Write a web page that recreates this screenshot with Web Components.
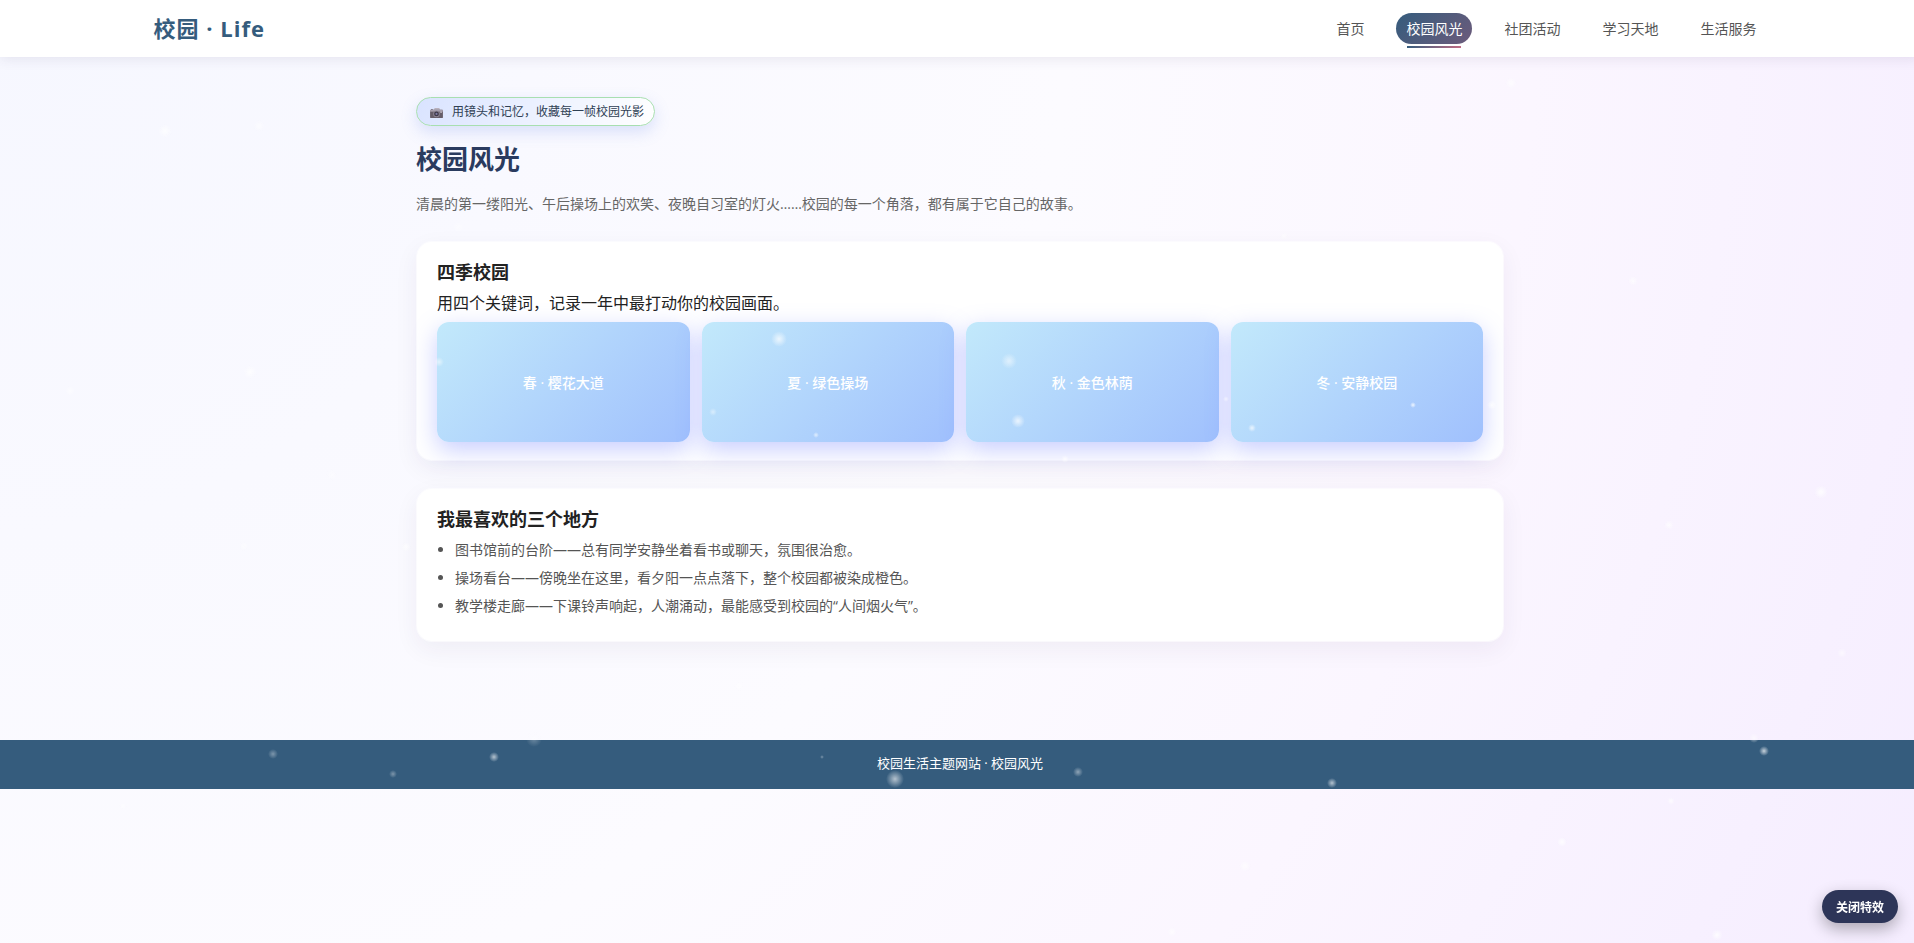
<!DOCTYPE html>
<html lang="zh-CN">
<head>
<meta charset="UTF-8">
<title>校园风光</title>
<style>
    html { overflow: hidden; }
    body {
        margin: 0 -6px 0 0;
        min-height: 100vh;
        font-family: "Open Sans", "Noto Sans CJK SC", sans-serif;
        color: #222;
        background: radial-gradient(circle at top left, #f6f7ff 0%, #fcfbff 50%, #fbf6ff 72%, #f5edff 100%);
    }
</style>
</head>
<body>
    <site-header>
        <nav-link href="#home">首页</nav-link>
        <nav-link href="#scenery" active>校园风光</nav-link>
        <nav-link href="#clubs">社团活动</nav-link>
        <nav-link href="#study">学习天地</nav-link>
        <nav-link href="#services">生活服务</nav-link>
    </site-header>

    <page-main>
        <page-hero heading="校园风光">
            <span slot="badge">用镜头和记忆，收藏每一帧校园光影</span>
            清晨的第一缕阳光、午后操场上的欢笑、夜晚自习室的灯火……校园的每一个角落，都有属于它自己的故事。
        </page-hero>
        <info-card heading="四季校园">
            <season-grid intro="用四个关键词，记录一年中最打动你的校园画面。">
                <season-tile>春 · 樱花大道</season-tile>
                <season-tile>夏 · 绿色操场</season-tile>
                <season-tile>秋 · 金色林荫</season-tile>
                <season-tile>冬 · 安静校园</season-tile>
            </season-grid>
        </info-card>
        <info-card heading="我最喜欢的三个地方">
            <place-list></place-list>
        </info-card>
    </page-main>

    <site-footer>校园生活主题网站 · 校园风光</site-footer>
    <snow-layer></snow-layer>
    <effect-toggle></effect-toggle>

<script>
class SiteHeader extends HTMLElement {
    constructor() {
        super();
        this.attachShadow({ mode: "open" });
        this.shadowRoot.innerHTML = `
            <style>
                :host { display: block; position: relative; background: #fff; box-shadow: 0 2px 12px rgba(60, 50, 90, 0.1); }
                header { display: flex; justify-content: space-between; align-items: flex-start; padding: 13px 8%; }
                .logo { font-size: 22px; line-height: 30px; font-weight: 700; letter-spacing: 1px; color: #355c7d; }
                nav { display: flex; gap: 22px; }
            </style>
            <header>
                <div class="logo">校园 · Life</div>
                <nav><slot></slot></nav>
            </header>
        `;
    }
}
customElements.define("site-header", SiteHeader);

class NavLink extends HTMLElement {
    constructor() {
        super();
        this.attachShadow({ mode: "open" });
        this.shadowRoot.innerHTML = `
            <style>
                :host { display: block; }
                a { position: relative; display: block; padding: 6px 10px 5px; border-radius: 16px; font-size: 14px; line-height: 20px; color: #555; text-decoration: none; }
                :host([active]) a { color: #fff; background: linear-gradient(135deg, #355c7d, #6c5b7b); }
                :host([active]) a::after {
                    content: ""; position: absolute; left: 11px; right: 11px; bottom: -4px; height: 2px;
                    background: linear-gradient(90deg, #355c7d, #c06c84);
                }
            </style>
            <a><slot></slot></a>
        `;
    }

    connectedCallback() {
        this.shadowRoot.querySelector("a").href = this.getAttribute("href");
    }
}
customElements.define("nav-link", NavLink);

class PageMain extends HTMLElement {
    constructor() {
        super();
        this.attachShadow({ mode: "open" });
        this.shadowRoot.innerHTML = `
            <style>
                :host { display: block; }
                main { display: flex; flex-direction: column; gap: 27px; box-sizing: border-box; max-width: 1120px; margin: 0 auto; padding: 40px 16px 98px; }
            </style>
            <main><slot></slot></main>
        `;
    }
}
customElements.define("page-main", PageMain);

class PageHero extends HTMLElement {
    constructor() {
        super();
        this.attachShadow({ mode: "open" });
        this.shadowRoot.innerHTML = `
            <style>
                :host { display: flex; flex-direction: column; align-items: flex-start; }
                .badge {
                    display: flex; align-items: center; gap: 8px; padding: 5px 10px 4px 12px;
                    border: 1px solid #a8dfb0; border-radius: 15px; font-size: 12px; line-height: 18px; color: #2f4054;
                    background: linear-gradient(120deg, #d9e3ff, #fff);
                    box-shadow: 0 6px 16px rgba(100, 130, 230, 0.22);
                }
                svg { display: block; margin-top: 3px; }
                h1 { margin: 13px 0 0; font-size: 26px; line-height: 40px; color: #2a3b5f; }
                p { margin: 15px 0 0; font-size: 14px; line-height: 20px; color: #666; }
            </style>
            <div class="badge">
                <svg width="15" height="11" viewBox="0 0 16 12" aria-hidden="true">
                    <path d="M2 1h2v1H2z" fill="#6d6470"/>
                    <path d="M5 2l1-2h5l1 2z" fill="#b9b1bd"/>
                    <rect x="1" y="2" width="14" height="9" rx="1" fill="#665d69"/>
                    <rect x="1" y="2" width="14" height="2" fill="#a79fae"/>
                    <circle cx="8" cy="6.5" r="3.6" fill="#8d8494"/>
                    <circle cx="8" cy="6.5" r="2.6" fill="#3d3848"/>
                    <circle cx="8" cy="6.5" r="1.2" fill="#7d79a2"/>
                    <rect x="12" y="4" width="2" height="1" fill="#e6dfe8"/>
                </svg>
                <slot name="badge"></slot>
            </div>
            <h1></h1>
            <p><slot></slot></p>
        `;
    }

    connectedCallback() {
        this.shadowRoot.querySelector("h1").textContent = this.getAttribute("heading");
    }
}
customElements.define("page-hero", PageHero);

class InfoCard extends HTMLElement {
    constructor() {
        super();
        this.attachShadow({ mode: "open" });
        this.shadowRoot.innerHTML = `
            <style>
                :host { display: block; }
                section { padding: 17px 20px 18px; border: 1px solid rgba(255, 255, 255, 0.6); border-radius: 16px; background: #fff; background-clip: padding-box; box-shadow: 0 8px 24px rgba(50, 40, 80, 0.06); }
                h2 { margin: 0; font-size: 18px; line-height: 26px; }
            </style>
            <section>
                <h2></h2>
                <slot></slot>
            </section>
        `;
    }

    connectedCallback() {
        this.shadowRoot.querySelector("h2").textContent = this.getAttribute("heading");
    }
}
customElements.define("info-card", InfoCard);

class SeasonGrid extends HTMLElement {
    constructor() {
        super();
        this.attachShadow({ mode: "open" });
        this.shadowRoot.innerHTML = `
            <style>
                :host { display: block; }
                p { margin: 6px 0 7px; font-size: 16px; line-height: 24px; }
                .grid { display: grid; grid-template-columns: repeat(4, 1fr); gap: 12px; }
            </style>
            <p></p>
            <div class="grid"><slot></slot></div>
        `;
    }

    connectedCallback() {
        this.shadowRoot.querySelector("p").textContent = this.getAttribute("intro");
    }
}
customElements.define("season-grid", SeasonGrid);

class SeasonTile extends HTMLElement {
    constructor() {
        super();
        this.attachShadow({ mode: "open" });
        this.shadowRoot.innerHTML = `
            <style>
                :host {
                    display: flex; align-items: center; justify-content: center; height: 120px; border-radius: 12px;
                    font-size: 14px; font-weight: 500; color: #fff;
                    background: linear-gradient(135deg, #c2e9fb, #a0c0fd);
                    box-shadow: 0 8px 24px rgba(110, 125, 255, 0.38);
                }
            </style>
            <slot></slot>
        `;
    }
}
customElements.define("season-tile", SeasonTile);

class PlaceList extends HTMLElement {
    constructor() {
        super();
        this.attachShadow({ mode: "open" });
        this.shadowRoot.innerHTML = `
            <style>
                :host { display: block; }
                ul { margin: 6px 0 5px; padding-left: 18px; font-size: 14px; line-height: 24px; color: #555; }
                li { margin-bottom: 4px; }
            </style>
            <ul>
                <li>图书馆前的台阶——总有同学安静坐着看书或聊天，氛围很治愈。</li>
                <li>操场看台——傍晚坐在这里，看夕阳一点点落下，整个校园都被染成橙色。</li>
                <li>教学楼走廊——下课铃声响起，人潮涌动，最能感受到校园的“人间烟火气”。</li>
            </ul>
        `;
    }
}
customElements.define("place-list", PlaceList);

class SiteFooter extends HTMLElement {
    constructor() {
        super();
        this.attachShadow({ mode: "open" });
        this.shadowRoot.innerHTML = `
            <style>
                :host { display: block; background: #355c7d; color: #fff; }
                footer { padding: 13px 0 16px; text-align: center; font-size: 13px; line-height: 20px; }
            </style>
            <footer><slot></slot></footer>
        `;
    }
}
customElements.define("site-footer", SiteFooter);

// [x, y, radius, opacity]
const flakes = [
    [165, 131, 7, 0.8], [259, 126, 6, 0.6], [250, 372, 7, 0.8], [70, 391, 5, 0.6], [332, 475, 6, 0.4],
    [244, 546, 5, 0.5], [406, 547, 5, 0.8], [458, 227, 6, 0.5], [439, 362, 5, 0.6], [779, 339, 8, 0.8],
    [713, 412, 4, 0.5], [816, 435, 3, 0.7], [1009, 361, 8, 0.6], [1018, 421, 7, 0.8], [1252, 428, 4, 0.8],
    [1413, 405, 3, 0.9], [1492, 405, 5, 0.8], [1065, 459, 4, 0.8], [1226, 399, 3, 0.6], [1284, 236, 4, 0.5],
    [273, 754, 5, 0.4], [393, 774, 4, 0.4], [494, 757, 5, 0.7], [534, 739, 8, 0.3], [822, 757, 2, 0.4],
    [895, 779, 9, 0.7], [1078, 772, 5, 0.5], [1332, 783, 5, 0.7], [1764, 751, 5, 0.8], [1754, 738, 5, 0.6],
    [1717, 935, 6, 0.9], [1633, 281, 5, 0.8], [1821, 492, 7, 0.9], [1669, 525, 5, 0.8], [1562, 842, 5, 0.9],
    [1671, 801, 4, 0.8], [1245, 866, 6, 0.7], [1511, 83, 6, 0.7], [1172, 932, 5, 0.7], [739, 686, 5, 0.5],
    [1842, 653, 5, 0.6], [123, 806, 4, 0.5]
];

class SnowLayer extends HTMLElement {
    constructor() {
        super();
        this.attachShadow({ mode: "open" });
        this.shadowRoot.innerHTML = `
            <style>
                :host { position: fixed; inset: 0; pointer-events: none; }
                svg { display: block; width: 100%; height: 100%; }
            </style>
            <svg aria-hidden="true">
                <defs>
                    <radialGradient id="flake">
                        <stop offset="0" stop-color="#fff" stop-opacity="0.9"/>
                        <stop offset="1" stop-color="#fff" stop-opacity="0"/>
                    </radialGradient>
                </defs>
                ${flakes.map(([x, y, r, o]) => `<circle cx="${x}" cy="${y}" r="${r}" opacity="${o}" fill="url(#flake)"/>`).join("")}
            </svg>
        `;
    }
}
customElements.define("snow-layer", SnowLayer);

class EffectToggle extends HTMLElement {
    constructor() {
        super();
        this.attachShadow({ mode: "open" });
        this.shadowRoot.innerHTML = `
            <style>
                :host { position: fixed; right: 16px; bottom: 20px; }
                button {
                    display: block; padding: 9px 14px 6px; border: 0; border-radius: 17px; cursor: pointer;
                    font: 700 12px/18px "Open Sans", "Noto Sans CJK SC", sans-serif;
                    color: #fff; background: #2d3558; box-shadow: 0 6px 16px rgba(0, 0, 0, 0.3);
                }
            </style>
            <button type="button">关闭特效</button>
        `;
    }

    connectedCallback() {
        const button = this.shadowRoot.querySelector("button");
        button.addEventListener("click", () => {
            const snow = document.querySelector("snow-layer");
            snow.hidden = !snow.hidden;
            snow.style.display = snow.hidden ? "none" : "";
            button.textContent = snow.hidden ? "开启特效" : "关闭特效";
        });
    }
}
customElements.define("effect-toggle", EffectToggle);
</script>
</body>
</html>
